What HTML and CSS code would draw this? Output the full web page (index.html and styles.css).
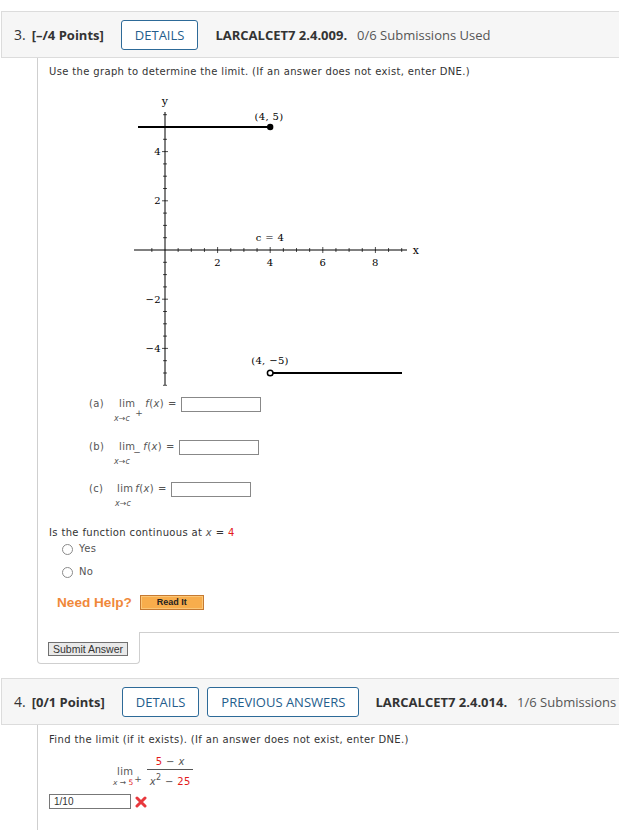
FILE: index.html
```html
<!DOCTYPE html>
<html>
<head>
<meta charset="utf-8">
<link rel="stylesheet" href="styles.css">
</head>
<body>
<div class="page">
  <div class="q">
    <div class="qhead">
      <span class="num">3.</span>
      <span class="pts">[–/4 Points]</span>
      <span class="btn">DETAILS</span>
      <span class="code">LARCALCET7 2.4.009.</span>
      <span class="subs">0/6 Submissions Used</span>
    </div>
    <div class="qbody b1">
      <div class="line">Use the graph to determine the limit. (If an answer does not exist, enter DNE.)</div>
      <svg class="graph" width="290" height="298" viewBox="0 0 290 298" xmlns="http://www.w3.org/2000/svg">
        <g stroke="#000" stroke-width="1" fill="none">
          <line x1="4" y1="158" x2="277" y2="158"/>
          <line x1="35" y1="20" x2="35" y2="293"/>
        </g>
        <g stroke="#000" stroke-width="0.7">
          <line x1="21.85" y1="156" x2="21.85" y2="160"/>
          <line x1="48.15" y1="156" x2="48.15" y2="160"/>
          <line x1="61.3" y1="156" x2="61.3" y2="160"/>
          <line x1="74.45" y1="156" x2="74.45" y2="160"/>
          <line x1="87.6" y1="155" x2="87.6" y2="161"/>
          <line x1="100.75" y1="156" x2="100.75" y2="160"/>
          <line x1="113.9" y1="156" x2="113.9" y2="160"/>
          <line x1="127.05" y1="156" x2="127.05" y2="160"/>
          <line x1="140.2" y1="155" x2="140.2" y2="161"/>
          <line x1="153.35" y1="156" x2="153.35" y2="160"/>
          <line x1="166.5" y1="156" x2="166.5" y2="160"/>
          <line x1="179.65" y1="156" x2="179.65" y2="160"/>
          <line x1="192.8" y1="155" x2="192.8" y2="161"/>
          <line x1="205.95" y1="156" x2="205.95" y2="160"/>
          <line x1="219.1" y1="156" x2="219.1" y2="160"/>
          <line x1="232.25" y1="156" x2="232.25" y2="160"/>
          <line x1="245.4" y1="155" x2="245.4" y2="161"/>
          <line x1="258.55" y1="156" x2="258.55" y2="160"/>
          <line x1="271.7" y1="156" x2="271.7" y2="160"/>
        </g>
        <g stroke="#000" stroke-width="0.7">
          <line x1="33" y1="22.7" x2="37" y2="22.7"/>
          <line x1="33" y1="35" x2="37" y2="35"/>
          <line x1="33" y1="47.3" x2="37" y2="47.3"/>
          <line x1="32" y1="59.6" x2="38" y2="59.6"/>
          <line x1="33" y1="71.9" x2="37" y2="71.9"/>
          <line x1="33" y1="84.2" x2="37" y2="84.2"/>
          <line x1="33" y1="96.5" x2="37" y2="96.5"/>
          <line x1="32" y1="108.8" x2="38" y2="108.8"/>
          <line x1="33" y1="121.1" x2="37" y2="121.1"/>
          <line x1="33" y1="133.4" x2="37" y2="133.4"/>
          <line x1="33" y1="145.7" x2="37" y2="145.7"/>
          <line x1="33" y1="170.3" x2="37" y2="170.3"/>
          <line x1="33" y1="182.6" x2="37" y2="182.6"/>
          <line x1="33" y1="194.9" x2="37" y2="194.9"/>
          <line x1="32" y1="207.2" x2="38" y2="207.2"/>
          <line x1="33" y1="219.5" x2="37" y2="219.5"/>
          <line x1="33" y1="231.8" x2="37" y2="231.8"/>
          <line x1="33" y1="244.1" x2="37" y2="244.1"/>
          <line x1="32" y1="256.4" x2="38" y2="256.4"/>
          <line x1="33" y1="268.7" x2="37" y2="268.7"/>
          <line x1="33" y1="281" x2="37" y2="281"/>
          <line x1="33" y1="293.3" x2="37" y2="293.3"/>
        </g>
        <g font-family="DejaVu Serif, serif" font-size="10" fill="#000">
          <text x="87.6" y="173.5" text-anchor="middle">2</text>
          <text x="140.2" y="173.5" text-anchor="middle">4</text>
          <text x="192.8" y="173.5" text-anchor="middle">6</text>
          <text x="245.4" y="173.5" text-anchor="middle">8</text>
          <text x="31" y="62.8" text-anchor="end">4</text>
          <text x="31" y="112.3" text-anchor="end">2</text>
          <text x="31" y="210.7" text-anchor="end">−2</text>
          <text x="31" y="259.8" text-anchor="end">−4</text>
          <text x="35" y="13" text-anchor="middle" font-size="11">y</text>
          <text x="286" y="161.5" text-anchor="middle" font-size="11">x</text>
          <text x="140" y="148.6" text-anchor="middle">c = 4</text>
          <text x="139" y="27.5" text-anchor="middle">(4, 5)</text>
          <text x="140" y="271.6" text-anchor="middle">(4, −5)</text>
        </g>
        <g stroke="#000" stroke-width="2">
          <line x1="8" y1="35" x2="140.2" y2="35"/>
          <line x1="143" y1="281" x2="272" y2="281"/>
        </g>
        <circle cx="140.2" cy="35" r="3.2" fill="#000"/>
        <circle cx="140.2" cy="281" r="2.8" fill="#fff" stroke="#000" stroke-width="1.5"/>
      </svg>

      <div class="limrow ra">
        <span class="lab">(a)</span>
        <span class="lim"><span class="limw">lim</span><span class="limsub"><i>x</i>→<i>c</i></span></span>
        <span class="side plus">+</span>
        <span class="fx"><i>f</i>(<i>x</i>)</span>
        <span class="eq">=</span>
        <span class="ans"></span>
      </div>
      <div class="limrow rb">
        <span class="lab">(b)</span>
        <span class="lim"><span class="limw">lim</span><span class="limsub"><i>x</i>→<i>c</i></span></span>
        <span class="side minus">−</span>
        <span class="fx"><i>f</i>(<i>x</i>)</span>
        <span class="eq">=</span>
        <span class="ans"></span>
      </div>
      <div class="limrow rc">
        <span class="lab">(c)</span>
        <span class="lim"><span class="limw">lim</span><span class="limsub"><i>x</i>→<i>c</i></span></span>
        <span class="fx"><i>f</i>(<i>x</i>)</span>
        <span class="eq">=</span>
        <span class="ans"></span>
      </div>

      <div class="line cont">Is the function continuous at <i class="mv">x</i> = <span class="red">4</span></div>
      <div class="radio r1"><span class="dot"></span>Yes</div>
      <div class="radio r2"><span class="dot"></span>No</div>
      <div class="help"><span class="need">Need Help?</span><span class="read">Read It</span></div>
    </div>
    <div class="qfoot">
      <div class="tab"><span class="submit">Submit Answer</span></div>
      <div class="rest"></div>
    </div>
  </div>

  <div class="q q2">
    <div class="qhead">
      <span class="num">4.</span>
      <span class="pts">[0/1 Points]</span>
      <span class="btn">DETAILS</span>
      <span class="btn btn2">PREVIOUS ANSWERS</span>
      <span class="code code2">LARCALCET7 2.4.014.</span>
      <span class="subs">1/6 Submissions Used</span>
    </div>
    <div class="qbody b2">
      <div class="line">Find the limit (if it exists). (If an answer does not exist, enter DNE.)</div>
      <div class="expr">
        <span class="lim2"><span class="limw">lim</span><span class="limsub"><i>x</i> → <span class="red">5</span></span></span>
        <span class="side2">+</span>
        <span class="frac">
          <span class="numr"><span class="red">5</span> − <i>x</i></span>
          <span class="den"><i>x</i><sup>2</sup> − <span class="red">25</span></span>
        </span>
      </div>
      <div class="answer">
        <span class="ans2">1/10</span>
        <svg class="wrong" width="12" height="12" viewBox="0 0 12 12" xmlns="http://www.w3.org/2000/svg">
          <path d="M2 2 L10 10 M10 2 L2 10" stroke="#e8383d" stroke-width="3" stroke-linecap="round"/>
        </svg>
      </div>
    </div>
  </div>
</div>
</body>
</html>
```
FILE: styles.css
```css
html, body {
  margin: 0;
  padding: 0;
  background: #fff;
  overflow: hidden;
}
body {
  font-family: "DejaVu Sans", Verdana, sans-serif;
  font-size: 10px;
  color: #333;
}
.page {
  padding-top: 11px;
  width: 760px;
}
.q {
  margin-left: 1px;
}
.qhead {
  display: flex;
  align-items: center;
  height: 45px;
  border: 1px solid #dcdcdc;
  border-right: none;
  background: #f6f6f6;
  padding-left: 12px;
  font-family: "Open Sans", sans-serif;
  font-size: 13px;
  color: #333;
  white-space: nowrap;
  overflow: hidden;
}
.num {
  font-size: 14px;
  margin-right: 6px;
}
.pts {
  font-weight: bold;
  font-size: 13px;
}
.btn {
  display: inline-flex;
  align-items: center;
  height: 28px;
  padding: 0 13px;
  margin-left: 17px;
  border: 1px solid #2d6a98;
  border-radius: 3px;
  color: #245d8c;
  background: #fff;
  font-size: 13px;
}
.btn2 {
  margin-left: 8px;
}
.code {
  font-weight: bold;
  margin-left: 17px;
}
.code2 {
  margin-left: 16px;
}
.subs {
  margin-left: 10px;
  color: #555;
}
.qbody {
  margin-left: 36px;
  border-left: 1px solid #cfcfcf;
  padding-left: 11px;
  letter-spacing: 0.35px;
}
.b1 {
  padding-top: 7px;
  padding-bottom: 20px;
}
.line {
  line-height: 14px;
  color: #333;
  white-space: nowrap;
}
.graph {
  display: block;
  margin-top: 13px;
  margin-left: 81px;
}
.limrow {
  display: flex;
  align-items: flex-start;
  height: 42px;
  color: #555;
  line-height: 14px;
}
.ra {
  margin-top: 7px;
}
.rb {
  margin-top: 1px;
}
.lab {
  margin-left: 40px;
  width: 15px;
}
.lim {
  display: flex;
  flex-direction: column;
  margin-left: 15px;
}
.rc .lim {
  margin-left: 13px;
}
.limw {
  line-height: 14px;
}
.limsub {
  font-size: 8px;
  line-height: 9px;
  margin-top: 3px;
  margin-left: -5px;
  letter-spacing: 0;
}
.rc .limsub {
  margin-left: -2px;
}
.side {
  font-size: 9px;
  line-height: 9px;
}
.plus {
  margin-top: 12px;
  margin-left: 0;
}
.minus {
  margin-top: 8px;
  margin-left: -2px;
}
.fx {
  margin-left: 2px;
}
.rb .fx {
  margin-left: 2px;
}
.rc .fx {
  margin-left: 2px;
}
.eq {
  margin-left: 4px;
}
.ans {
  display: block;
  width: 80px;
  height: 15px;
  box-sizing: border-box;
  border: 1px solid #888;
  background: #fff;
  margin-left: 4px;
}
.cont {
  margin-top: 2px;
}
.mv {
  color: #555;
}
.red {
  color: #e31b1b;
}
.radio {
  display: flex;
  align-items: center;
  height: 14px;
  line-height: 14px;
  color: #555;
  margin-left: 13px;
}
.r1 {
  margin-top: 2px;
}
.r2 {
  margin-top: 9px;
}
.dot {
  width: 9px;
  height: 9px;
  border: 1px solid #8a8a8a;
  border-radius: 50%;
  margin-right: 6px;
  background: #fff;
}
.help {
  display: flex;
  align-items: center;
  height: 20px;
  margin-top: 13px;
  margin-left: 8px;
  letter-spacing: 0;
}
.need {
  font-family: "Liberation Sans", Arial, sans-serif;
  font-weight: bold;
  font-size: 13.6px;
  color: #f0883a;
}
.read {
  display: inline-flex;
  align-items: center;
  justify-content: center;
  width: 64px;
  height: 15px;
  box-sizing: border-box;
  margin-left: 8px;
  border: 1px solid #c57a32;
  box-shadow: inset 0 0 0 1px #fcc777;
  background: #f8ad4c;
  font-family: "Liberation Sans", Arial, sans-serif;
  font-weight: bold;
  font-size: 9px;
  color: #222;
}
.qfoot {
  display: flex;
  margin-left: 36px;
}
.tab {
  width: 103px;
  height: 32px;
  box-sizing: border-box;
  border: 1px solid #cfcfcf;
  border-top: none;
  border-radius: 0 0 4px 4px;
  padding-top: 10px;
  padding-left: 10px;
}
.submit {
  display: flex;
  align-items: center;
  justify-content: center;
  width: 80px;
  height: 14px;
  box-sizing: border-box;
  border: 1px solid #707070;
  background: #e9e9e9;
  font-family: "Liberation Sans", Arial, sans-serif;
  font-size: 10.5px;
  color: #333;
}
.rest {
  flex: 1;
  height: 0;
  border-top: 1px solid #cfcfcf;
}
.q2 {
  margin-top: 14px;
}
.b2 {
  padding-top: 8px;
  height: 100px;
}
.expr {
  display: flex;
  align-items: flex-start;
  margin-top: 9px;
  margin-left: 64px;
  color: #555;
}
.lim2 {
  display: flex;
  flex-direction: column;
  margin-top: 10px;
}
.lim2 .limw {
  line-height: 12px;
  margin-left: 4px;
}
.lim2 .limsub {
  margin-top: 0;
  margin-left: 0;
  font-size: 7.5px;
}
.side2 {
  font-size: 9px;
  line-height: 9px;
  margin-top: 19px;
  margin-left: 1px;
}
.frac {
  display: flex;
  flex-direction: column;
  align-items: center;
  margin-left: 5px;
  width: 46px;
}
.numr {
  line-height: 12px;
  width: 100%;
  text-align: center;
  border-bottom: 1px solid #555;
  padding-bottom: 1px;
}
.den {
  line-height: 12px;
  margin-top: 6px;
}
.den sup {
  font-size: 8px;
  line-height: 0;
  vertical-align: 5px;
}
.answer {
  display: flex;
  align-items: center;
  margin-top: 6px;
}
.ans2 {
  display: flex;
  align-items: center;
  width: 82px;
  height: 15px;
  box-sizing: border-box;
  border: 1px solid #777;
  padding-left: 4px;
  font-family: "Liberation Sans", Arial, sans-serif;
  font-size: 10px;
  color: #333;
  letter-spacing: 0;
}
.wrong {
  margin-left: 4px;
}
```
